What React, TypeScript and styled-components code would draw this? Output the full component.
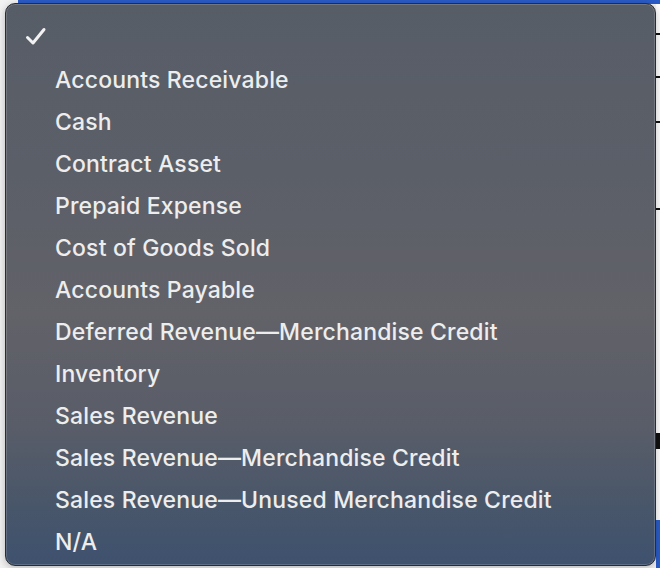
import React from "react";
import styled, { createGlobalStyle } from "styled-components";

const Global = createGlobalStyle`
  html, body { margin: 0; padding: 0; }
  body {
    width: 660px;
    height: 568px;
    overflow: hidden;
    background: #f3f3f3;
    font-family: Inter, "Noto Sans", "Liberation Sans", sans-serif;
  }
`;

const Page = styled.div`
  position: relative;
  width: 660px;
  height: 568px;
  overflow: hidden;
  background:
    linear-gradient(#2a5cc8, #2a5cc8) 18px 0 / 642px 4px no-repeat,
    linear-gradient(
        180deg,
        #2a5cc8 0 4px,
        #ffffff 4px 33px,
        #111 33px 35px,
        #ffffff 35px 76px,
        #111 76px 78px,
        #ffffff 78px 121px,
        #111 121px 123px,
        #ffffff 123px 208px,
        #111 208px 210px,
        #ffffff 210px 433px,
        #111 433px 449px,
        #ffffff 449px 520px,
        #2a5cc8 520px 568px
      )
      656px 0 / 4px 568px no-repeat,
    #f3f3f3;
`;

const Menu = styled.div`
  position: absolute;
  left: 5px;
  top: 3px;
  width: 651px;
  height: 563px;
  box-sizing: border-box;
  border-radius: 10px;
  border: 1px solid #2a2c30;
  box-shadow: inset 0 0 0 1px rgba(255, 255, 255, 0.16), 0 2px 8px rgba(0, 0, 0, 0.25);
  background: linear-gradient(
    180deg,
    #575d67 0%,
    #5b5f68 30%,
    #626268 55%,
    #595d68 75%,
    #48566a 90%,
    #3e516e 100%
  );
  padding: 13px 0 0 19px;
  display: flex;
  flex-direction: column;
`;

const Item = styled.div`
  height: 42px;
  display: flex;
  align-items: center;
  color: #ededed;
  font-size: 23px;
  font-weight: 500;
  letter-spacing: 0.16px;
  white-space: nowrap;
`;

const CheckSlot = styled.span`
  width: 30px;
  height: 42px;
  flex: none;
  display: flex;
  align-items: center;
`;

const Check = styled.svg`
  width: 22px;
  height: 19px;
  margin-top: -3px;
`;

const items = [
  "",
  "Accounts Receivable",
  "Cash",
  "Contract Asset",
  "Prepaid Expense",
  "Cost of Goods Sold",
  "Accounts Payable",
  "Deferred Revenue\u2014Merchandise Credit",
  "Inventory",
  "Sales Revenue",
  "Sales Revenue\u2014Merchandise Credit",
  "Sales Revenue\u2014Unused Merchandise Credit",
  "N/A",
];

export default function App() {
  return (
    <>
      <Global />
      <Page>
        <Menu>
          {items.map((t, i) => (
            <Item key={i}>
              <CheckSlot>
                {i === 0 && (
                  <Check viewBox="0 0 22 19">
                    <path
                      d="M2.5 10.5 L8 16 L19 2.5"
                      fill="none"
                      stroke="#f2f2f2"
                      strokeWidth="3"
                      strokeLinecap="round"
                      strokeLinejoin="round"
                    />
                  </Check>
                )}
              </CheckSlot>
              {t}
            </Item>
          ))}
        </Menu>
      </Page>
    </>
  );
}
